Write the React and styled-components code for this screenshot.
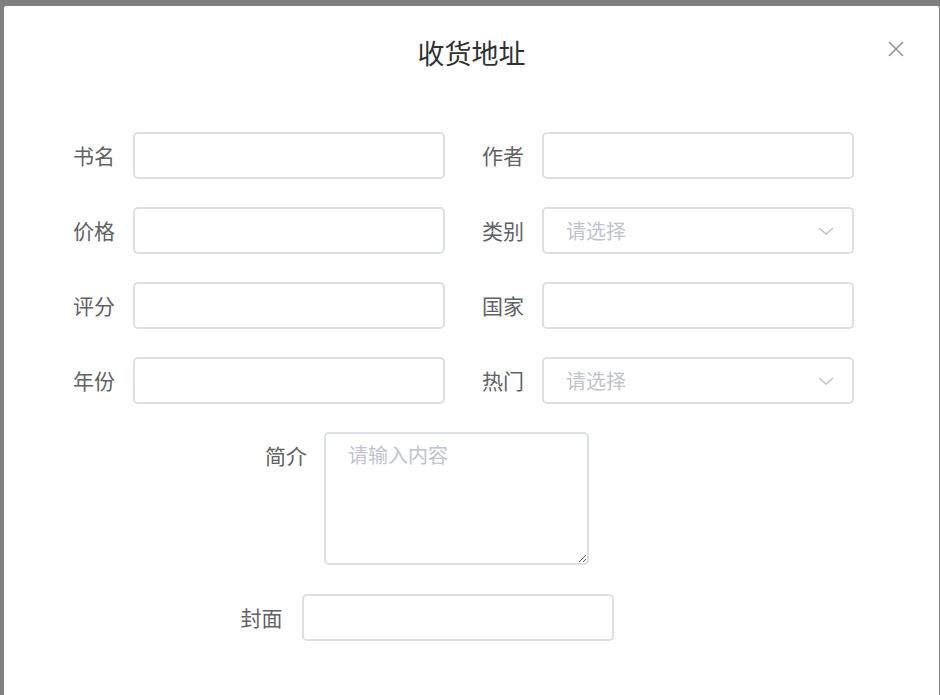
import React from "react";
import styled, { createGlobalStyle } from "styled-components";

const Global = createGlobalStyle`
  html, body {
    margin: 0;
    padding: 0;
    background: #808080;
    overflow: hidden;
    font-family: "Noto Sans CJK SC", "Noto Sans", sans-serif;
  }
  * { box-sizing: border-box; }
`;

const Page = styled.div`
  width: 940px;
  height: 695px;
  padding: 6px 1px 0 4px;
  overflow: hidden;
`;

const Dialog = styled.div`
  position: relative;
  background: #fff;
  height: 760px;
  border-radius: 2px;
`;

const Header = styled.div`
  padding: 32px 20px 0;
  text-align: center;
`;

const Title = styled.h2`
  margin: 0;
  font-size: 27px;
  line-height: 30px;
  font-weight: 400;
  color: #303133;
`;

const CloseButton = styled.button`
  position: absolute;
  top: 35px;
  right: 35px;
  width: 16px;
  height: 16px;
  padding: 0;
  border: 0;
  background: transparent;
  cursor: pointer;
  display: flex;
`;

const Body = styled.div`
  padding: 64px 0 0;
`;

const Grid = styled.div`
  display: grid;
  grid-template-columns: 372px 372px;
  column-gap: 37px;
  row-gap: 28px;
  padding-left: 69px;
`;

const Item = styled.div`
  display: flex;
  align-items: flex-start;
`;

const Label = styled.label`
  flex: 0 0 ${(p) => p.$w || 60}px;
  font-size: 21px;
  line-height: 47px;
  color: #606266;
  white-space: nowrap;
`;

const Field = styled.div`
  position: relative;
  width: ${(p) => p.$w || 312}px;
  height: 47px;
  border: 2px solid #dcdfe6;
  border-radius: 5px;
  background: #fff;
  display: flex;
  align-items: center;
  padding: 0 18px 0 22px;
`;

const Input = styled.input`
  flex: 1;
  min-width: 0;
  border: 0;
  outline: none;
  background: transparent;
  font-family: inherit;
  font-size: 20px;
  color: #606266;
  padding: 0;
  &::placeholder { color: #c0c4cc; }
`;

const Placeholder = styled.span`
  flex: 1;
  font-size: 20px;
  color: #c0c4cc;
`;

const Bottom = styled.div`
  display: flex;
  flex-direction: column;
  align-items: center;
  padding-right: 89px;
  margin-top: 28px;
  gap: 29px;
`;

const TextArea = styled.textarea`
  width: 265px;
  height: 133px;
  border: 2px solid #dcdfe6;
  border-radius: 5px;
  padding: 7px 22px;
  font-family: inherit;
  font-size: 20px;
  line-height: 28px;
  color: #606266;
  resize: vertical;
  outline: none;
  &::placeholder { color: #c0c4cc; }
`;

const Chevron = () => (
  <svg width="16" height="8" viewBox="0 0 16 8" fill="none">
    <path d="M1 1 L8 7 L15 1" stroke="#c0c4cc" strokeWidth="1.6" />
  </svg>
);

const TextField = ({ w }) => (
  <Field $w={w}>
    <Input />
  </Field>
);

const SelectField = () => (
  <Field>
    <Placeholder>请选择</Placeholder>
    <Chevron />
  </Field>
);

export default function App() {
  return (
    <Page>
      <Global />
      <Dialog>
        <Header>
          <Title>收货地址</Title>
          <CloseButton aria-label="close">
            <svg width="16" height="16" viewBox="0 0 16 16">
              <path d="M1 1 L15 15 M15 1 L1 15" stroke="#909399" strokeWidth="1.6" />
            </svg>
          </CloseButton>
        </Header>
        <Body>
          <Grid>
            <Item><Label>书名</Label><TextField /></Item>
            <Item><Label>作者</Label><TextField /></Item>
            <Item><Label>价格</Label><TextField /></Item>
            <Item><Label>类别</Label><SelectField /></Item>
            <Item><Label>评分</Label><TextField /></Item>
            <Item><Label>国家</Label><TextField /></Item>
            <Item><Label>年份</Label><TextField /></Item>
            <Item><Label>热门</Label><SelectField /></Item>
          </Grid>
          <Bottom>
            <Item>
              <Label $w={59}>简介</Label>
              <TextArea placeholder="请输入内容" />
            </Item>
            <Item>
              <Label $w={61}>封面</Label>
              <TextField w={312} />
            </Item>
          </Bottom>
        </Body>
      </Dialog>
    </Page>
  );
}
